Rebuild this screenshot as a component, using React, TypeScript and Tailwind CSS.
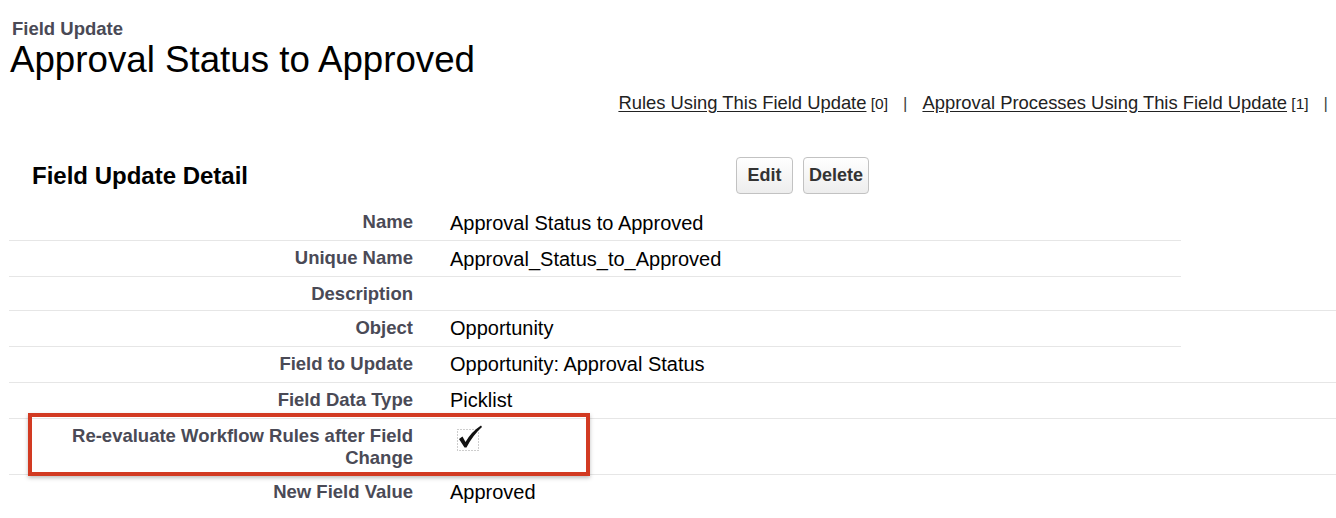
import React from "react";

type Row = { label: string; value?: string; wide?: boolean; check?: boolean; last?: boolean };

const rows: Row[] = [
  { label: "Name", value: "Approval Status to Approved" },
  { label: "Unique Name", value: "Approval_Status_to_Approved" },
  { label: "Description", value: "", wide: true },
  { label: "Object", value: "Opportunity" },
  { label: "Field to Update", value: "Opportunity: Approval Status", wide: true },
  { label: "Field Data Type", value: "Picklist", wide: true },
  { label: "Re-evaluate Workflow Rules after Field Change", check: true, wide: true },
  { label: "New Field Value", value: "Approved", last: true },
];

function CheckedBox() {
  return (
    <svg width="30" height="30" viewBox="0 0 30 30" className="block">
      <rect x="2.5" y="6.5" width="21" height="21" fill="none" stroke="#9a9a9a" strokeWidth="1" strokeDasharray="1 2" />
      <path d="M4 16 L7.5 13.5 L10.5 19 Q16 9 26 2.5 L27 4 Q18 12 11.5 24.5 L9.5 24.5 Z" fill="#111" />
    </svg>
  );
}

export default function App() {
  return (
    <div className="relative h-[518px] w-[1336px] overflow-hidden bg-white font-['Liberation_Sans',Arial,sans-serif]">
      <div className="pl-[12px] pt-[18px]">
        <div className="text-[18.5px] font-bold leading-[22px] text-[#4a4a56]">Field Update</div>
        <h1 className="-ml-[2px] text-[36.7px] leading-[40px] text-black">Approval Status to Approved</h1>
      </div>

      <div className="mt-[12px] flex items-center justify-end pr-[8px] text-[18.4px] leading-[22px] text-[#222]">
        <span>
          <span className="underline underline-offset-2">Rules Using This Field Update</span>
          <span className="text-[15.5px]"> [0]</span>
        </span>
        <span className="px-[15px] text-[17px] text-[#444]">|</span>
        <span>
          <span className="underline underline-offset-2">Approval Processes Using This Field Update</span>
          <span className="text-[15.5px]"> [1]</span>
        </span>
        <span className="pl-[15px] text-[17px] text-[#444]">|</span>
      </div>

      <div className="mt-[42px] flex h-[37px] items-center pl-[32px]">
        <h2 className="w-[704px] text-[24px] font-bold text-black">Field Update Detail</h2>
        <div className="flex gap-[10px]">
          <button className="h-[37px] w-[57px] rounded-[4px] border border-[#c2c2c2] bg-gradient-to-b from-white to-[#ededed] text-[18px] font-bold text-[#333]">
            Edit
          </button>
          <button className="h-[37px] w-[66px] rounded-[4px] border border-[#c2c2c2] bg-gradient-to-b from-white to-[#ededed] text-[18px] font-bold text-[#333]">
            Delete
          </button>
        </div>
      </div>

      <div className="mt-[11px] pl-[9px]">
        {rows.map((r) => (
          <div
            key={r.label}
            className={`flex ${r.last ? "" : "border-b border-[#e6e6e6]"} ${r.wide ? "w-[1327px]" : "w-[1172px]"}`}
          >
            <div className="w-[404px] pt-[6px] pb-[4px] pl-[55px] text-right text-[18.5px] font-bold leading-[22.5px] text-[#4a4a56]">
              {r.label}
            </div>
            <div className="pl-[37px] py-[5.5px] text-[20px] leading-[24px] text-black">
              {r.check ? (
                <div className="-mt-[1px] pl-[5px]">
                  <CheckedBox />
                </div>
              ) : (
                r.value
              )}
            </div>
          </div>
        ))}
      </div>

      <div className="pointer-events-none absolute left-[28px] top-[413px] h-[63px] w-[562px] border-4 border-[#d23a22] shadow-[0_2px_4px_rgba(0,0,0,0.25)]" />
    </div>
  );
}
